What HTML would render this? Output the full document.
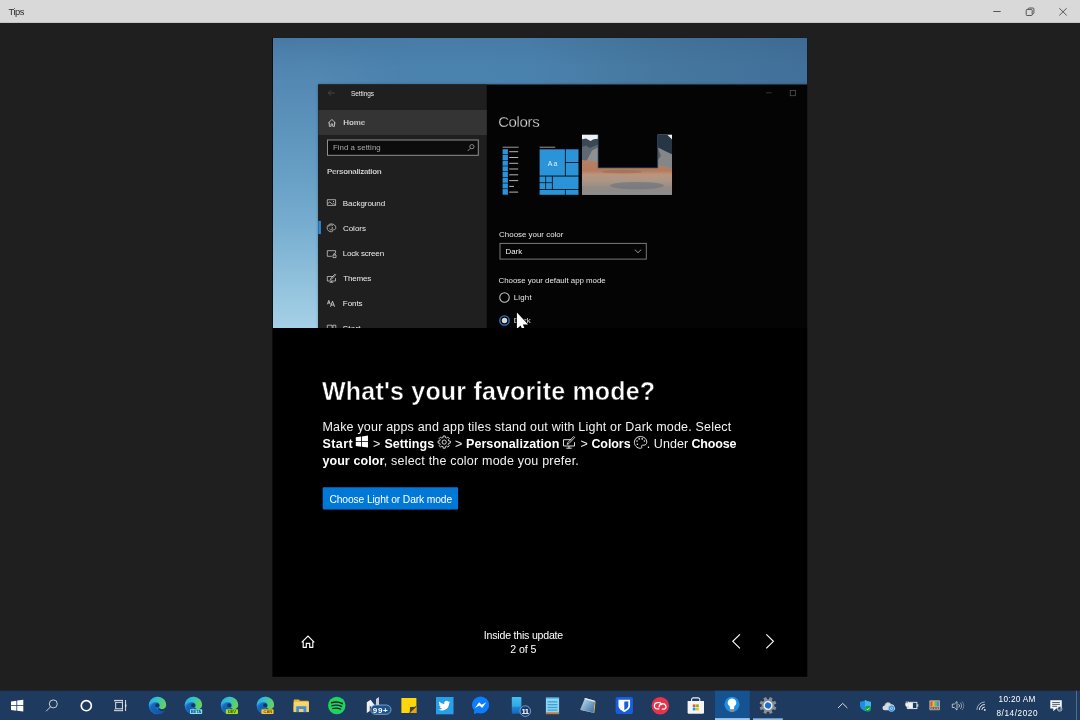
<!DOCTYPE html>
<html>
<head>
<meta charset="utf-8">
<title>Tips</title>
<style>
*{box-sizing:border-box;margin:0;padding:0}
html,body{width:1080px;height:720px;overflow:hidden;background:#1f1f1f;font-family:"Liberation Sans",sans-serif;color:#fff}
svg{position:absolute;left:0;top:0;overflow:hidden}
.t{position:absolute;white-space:nowrap;line-height:1}
#herotext,#toptext{will-change:transform}
#toptext{position:absolute;left:0;top:0;width:1080px;height:720px}
#herotext{position:absolute;left:272px;top:37px;width:536px;height:291px;overflow:hidden}
</style>
</head>
<body>
<svg width="1080" height="720" viewBox="0 0 1080 720" fill="none">
<defs>
  <linearGradient id="hbg" gradientUnits="userSpaceOnUse" x1="273" y1="28" x2="807" y2="47">
    <stop offset="0" stop-color="#4c80ab"/><stop offset=".3" stop-color="#4b83af"/><stop offset=".48" stop-color="#4a82ae"/><stop offset=".72" stop-color="#46789f"/><stop offset="1" stop-color="#41709a"/>
  </linearGradient>
  <linearGradient id="htop" gradientUnits="userSpaceOnUse" x1="0" y1="37.800" x2="0" y2="68">
    <stop offset="0" stop-color="#0a1e3c" stop-opacity=".07"/><stop offset="1" stop-color="#0a1e3c" stop-opacity="0"/>
  </linearGradient>
  <linearGradient id="hlight" gradientUnits="userSpaceOnUse" x1="0" y1="37.800" x2="0" y2="328.800">
    <stop offset="0" stop-color="#5489b3" stop-opacity="0"/><stop offset=".1" stop-color="#5489b3" stop-opacity=".6"/><stop offset=".16" stop-color="#5489b3"/>
    <stop offset=".285" stop-color="#5b92ba"/><stop offset=".49" stop-color="#69a0c6"/><stop offset=".645" stop-color="#77adcf"/><stop offset=".835" stop-color="#90c1dc"/><stop offset="1" stop-color="#a6d1e7"/>
  </linearGradient>
  <linearGradient id="hmaskg" gradientUnits="userSpaceOnUse" x1="273" y1="0" x2="400" y2="0">
    <stop offset="0" stop-color="#fff"/><stop offset=".36" stop-color="#fff"/><stop offset="1" stop-color="#000"/>
  </linearGradient>
  <mask id="hmask" maskUnits="userSpaceOnUse" x="272" y="37" width="140" height="292"><rect x="272" y="37" width="140" height="292" fill="url(#hmaskg)"/></mask>
  <clipPath id="heroclip"><rect x="272.900" y="37.800" width="534.400" height="290.100"/></clipPath>
  <filter id="wsh" x="-5%" y="-5%" width="110%" height="110%"><feGaussianBlur stdDeviation="1.500"/></filter>
</defs>
<!-- title bar -->
<rect x="0" y="0" width="1080" height="22.900" fill="#d9d9d9"/>
<g stroke="#474747" stroke-width=".9" transform="translate(990 4)">
  <path d="M3.300 7.500H10.700"/>
  <path d="M37.100 5.400h4.200q.9 0 .9.900v4.300q0 .9-.9.900h-4.200q-.9 0-.9-.9V6.300q0-.9.900-.9zM37.700 5.300l.8-1q.3-.3.800-.3h3.700q.9 0 .9.900v3.900q0 .5-.4.800l-1.100.9"/>
  <path d="M69.300 4.200l7.400 7.200M76.700 4.200l-7.400 7.200"/>
</g>
<!-- card -->
<rect x="272.400" y="37.800" width="534.900" height="639" fill="#000"/>
<g clip-path="url(#heroclip)">
  <rect x="272.900" y="37.800" width="534.400" height="291" fill="url(#hbg)"/>
  <rect x="272.900" y="37.800" width="534.400" height="31" fill="url(#htop)"/>
  <rect x="272.900" y="37.800" width="140" height="291" fill="url(#hlight)" mask="url(#hmask)"/>
  <rect x="318.300" y="84.500" width="489" height="245" fill="#000" opacity=".32" filter="url(#wsh)"/>
  <!-- settings window -->
  <rect x="318.300" y="84.500" width="489" height="245" fill="#040404"/>
  <rect x="318.300" y="84.500" width="168.500" height="245" fill="#1f1f1f"/>
  <rect x="318.300" y="110" width="168.500" height="25" fill="#343434"/>
  <rect x="327.500" y="140" width="150.800" height="15.300" fill="#0c0c0c" stroke="#909090" stroke-width="1"/>
  <rect x="318.300" y="220.900" width="2.600" height="13.200" fill="#2b8bd6"/>
  <rect x="500" y="243.400" width="146.300" height="15.700" fill="#040404" stroke="#7a7a7a" stroke-width="1"/>
  
  <!-- back arrow + caption buttons -->
  <path d="M334.700 93H328.400M331 90.300L328.300 93L331 95.700" stroke="#4e4e4e" stroke-width=".85"/>
  <path d="M766 92.800H771.600" stroke="#3c3c3c" stroke-width=".9"/>
  <rect x="790.3" y="90.500" width="5.200" height="5.200" stroke="#525252" stroke-width=".8"/>
  <!-- home -->
  <path d="M328.200 123.100L331.900 119.500L335.600 123.100M329.300 122.300V126.300H331.100V123.900H332.700V126.300H334.500V122.300" stroke="#e6e6e6" stroke-width=".75" stroke-linejoin="round"/>
  <!-- search glyph -->
  <circle cx="471.900" cy="146.700" r="2.100" stroke="#a8a8a8" stroke-width=".8"/>
  <path d="M470.400 148.300L467.700 151" stroke="#a8a8a8" stroke-width=".8"/>
  <!-- nav: background -->
  <g stroke="#dcdcdc" stroke-width=".7" stroke-linejoin="round">
    <rect x="327.300" y="199.700" width="8.300" height="5.700"/>
    <path d="M327.500 203.800L329.800 201.900L332.300 204.200L333.500 203.300L335.400 204.900"/>
    <circle cx="333.500" cy="201.400" r=".5" fill="#e4e4e4" stroke="none"/>
    <!-- colors palette -->
    <path d="M331.300 223.900C333.900 223.900 335.800 225.700 335.800 227.700C335.800 229 334.900 229.800 333.800 229.800H332.900C332.300 229.800 332 230.200 332.300 230.800C332.600 231.400 332.200 231.800 331.500 231.800C329 231.800 327.100 230 327.100 227.800C327.100 225.600 329 223.900 331.300 223.900Z"/>
    <path d="M328.600 226.800a2.600 2.600 0 0 1 4.200 -1.200M329.400 228.700a1.600 1.600 0 1 0 2.500 -1.900" stroke-width=".7"/>
    <!-- lock screen -->
    <path d="M331.800 256.300H327.300V250.700H335.600V253.300"/>
    <rect x="333" y="255" width="3" height="2.600"/>
    <path d="M333.700 255v-.8a.8.800 0 0 1 1.600 0v.8" stroke-width=".7"/>
    <!-- themes -->
    <path d="M333.200 276.500H327.300V281H335.500V278M329.600 282.300H333.300M331.400 281V282.300"/>
    <path d="M335.700 274.800L331.600 279.100L330.300 279.700L330.800 278.400L334.900 274.100Z" stroke-width=".7"/>
    <!-- fonts -->
    <path d="M327.400 304.300L328.800 300.300L330.200 304.300M327.900 303H329.700" stroke-width=".75"/>
    <path d="M330.500 306.700L332.500 301.200L334.600 306.700M331.200 305H333.800" stroke-width=".85"/>
    <!-- start (clipped) -->
    <rect x="327.300" y="325.200" width="4.800" height="3.400"/><rect x="333" y="325.200" width="2.800" height="3.400"/>
  </g>
  <!-- preview: list -->
  <rect x="502.600" y="146.700" width="16" height="1" fill="#9a9a9a"/>
  <g fill="#2b94d8">
    <rect x="502.600" y="149.200" width="5.300" height="5.100"/><rect x="502.600" y="154.900" width="5.300" height="5.100"/>
    <rect x="502.600" y="160.600" width="5.300" height="5.100"/><rect x="502.600" y="166.300" width="5.300" height="5.100"/>
    <rect x="502.600" y="172" width="5.300" height="5.100"/><rect x="502.600" y="177.700" width="5.300" height="5.100"/>
    <rect x="502.600" y="183.400" width="5.300" height="5.100"/><rect x="502.600" y="189.100" width="5.300" height="5.600"/>
  </g>
  <g fill="#b4b4b4">
    <rect x="509.200" y="151.200" width="9" height="1"/><rect x="509.200" y="157" width="9" height="1"/>
    <rect x="509.200" y="162.800" width="9" height="1"/><rect x="509.200" y="168.500" width="9" height="1"/>
    <rect x="509.200" y="174.300" width="9" height="1"/><rect x="509.200" y="180.100" width="9" height="1"/>
    <rect x="509.200" y="185.900" width="4.800" height="1"/><rect x="509.200" y="191.600" width="9" height="1"/>
  </g>
  <!-- preview: tiles -->
  <rect x="539.600" y="146.700" width="15.600" height="1" fill="#9a9a9a"/>
  <g fill="#2b94d8">
    <rect x="539.600" y="149.300" width="25.300" height="26.300"/>
    <rect x="565.700" y="149.300" width="12.800" height="12.800"/><rect x="565.700" y="162.900" width="12.800" height="12.700"/>
    <rect x="539.600" y="176.500" width="5.800" height="5.900"/><rect x="546.100" y="176.500" width="5.800" height="5.900"/>
    <rect x="539.600" y="183.100" width="5.800" height="6"/><rect x="546.100" y="183.100" width="5.800" height="6"/>
    <rect x="552.700" y="176.500" width="25.800" height="12.600"/>
    <rect x="539.600" y="189.900" width="25.300" height="4.900"/><rect x="565.700" y="189.900" width="12.800" height="4.900"/>
  </g>
  <!-- preview: wallpaper -->
  <defs>
    <linearGradient id="sand" x1="0" y1="0" x2="0" y2="1">
      <stop offset="0" stop-color="#b98064"/><stop offset=".3" stop-color="#b57b5e"/><stop offset=".42" stop-color="#ba957d"/>
      <stop offset=".6" stop-color="#ab9686"/><stop offset=".8" stop-color="#938b85"/><stop offset="1" stop-color="#8a8a8a"/>
    </linearGradient>
    <linearGradient id="mtl" x1="0" y1="0" x2="0" y2="1">
      <stop offset="0" stop-color="#2f3b45"/><stop offset=".4" stop-color="#55606a"/><stop offset="1" stop-color="#8a8c8e"/>
    </linearGradient>
    <linearGradient id="mtr" x1="0" y1="0" x2="0" y2="1">
      <stop offset="0" stop-color="#1f2d3a"/><stop offset=".45" stop-color="#3a444e"/><stop offset=".6" stop-color="#77797b"/><stop offset="1" stop-color="#8a8a8a"/>
    </linearGradient>
    <clipPath id="wp"><rect x="581.900" y="134.400" width="90.200" height="60.300"/></clipPath>
  </defs>
  <g clip-path="url(#wp)">
    <rect x="581.900" y="134.400" width="90.200" height="60.300" fill="#eef1f3"/>
    <path d="M581.900 139.300L586 138.600L590.500 141L593.500 139.200L598.100 138.800V162H581.900Z" fill="#3b4954"/>
    <path d="M581.900 147L586 145.500L590 148L598.100 144.500V162H581.900Z" fill="#5d6a74"/>
    <path d="M586 162L592 150.500L598.100 147.500V162Z" fill="#8e9092"/>
    <path d="M657.700 134.400H667L672.100 139.400V170H657.700Z" fill="#263644"/>
    <path d="M657.700 147.300L665 151L672.100 154.200V170H657.700Z" fill="#858687"/>
    <path d="M657.700 147.300L661 156L657.700 160Z" fill="#5a6068"/>
    <path d="M581.900 160.100L598.100 161.700V167.900H657.700V165L672.100 168.400V194.700H581.900Z" fill="url(#sand)"/>
    <ellipse cx="622" cy="171.800" rx="20" ry="1.700" fill="#9a6248" opacity=".45"/>
    <ellipse cx="637" cy="185.600" rx="27" ry="3.600" fill="#65717c" opacity=".6"/>
    <rect x="581.900" y="191.500" width="90.200" height="3.200" fill="#8f8f8f" opacity=".7"/>
  </g>
  <rect x="598.100" y="134" width="59.600" height="33.900" fill="#040404"/>
  <path d="M598.100 134.400V167.900H657.700V134.400" stroke="#1f4468" stroke-width=".6"/>
  <!-- dropdown chevron -->
  <path d="M634.800 249.600L638 252.700L641.200 249.600" stroke="#bcbcbc" stroke-width=".8"/>
  <!-- radios -->
  <circle cx="504.500" cy="297.400" r="4.750" stroke="#c4c4c4" stroke-width="1.050"/>
  <circle cx="504.500" cy="320.500" r="4.700" stroke="#2a7dc2" stroke-width="1.300"/>
  <circle cx="504.500" cy="320.500" r="2.700" fill="#d6d6d6"/>

</g>
<!-- button -->
<rect x="322.700" y="487.300" width="135.400" height="22.300" rx="1" fill="#0078d7"/>

  <!-- windows logo -->
  <g fill="#fff">
    <path d="M355.800 437.300L361.200 436.550V441.200H355.800Z"/><path d="M362 436.450L368 435.600V441.200H362Z"/>
    <path d="M355.800 442H361.200V446.650L355.800 445.900Z"/><path d="M362 442H368V447.600L362 446.750Z"/>
  </g>
  <!-- gear -->
  <path d="M448.76 440.97L450.32 441.08L450.32 443.12L448.76 443.23L448.23 444.52L449.24 445.70L447.80 447.14L446.62 446.13L445.33 446.66L445.22 448.22L443.18 448.22L443.07 446.66L441.78 446.13L440.60 447.14L439.16 445.70L440.17 444.52L439.64 443.23L438.08 443.12L438.08 441.08L439.64 440.97L440.17 439.68L439.16 438.50L440.60 437.06L441.78 438.07L443.07 437.54L443.18 435.98L445.22 435.98L445.33 437.54L446.62 438.07L447.80 437.06L449.24 438.50L448.23 439.68Z" stroke="#f4f4f4" stroke-width=".85" stroke-linejoin="round"/>
  <circle cx="444.200" cy="442.100" r="2.100" stroke="#f4f4f4" stroke-width=".85"/>
  <!-- personalization glyph -->
  <g stroke="#f4f4f4" stroke-width=".9" stroke-linejoin="round">
    <path d="M571.300 439.700H563.500V446H574.500V442.200M566.300 448.200H571.700M569 446V448.200"/>
    <path d="M574.700 437.500L569 443.500L567.200 444.400L567.900 442.500L573.600 436.500Z" stroke-width=".8"/>
  </g>
  <!-- palette glyph -->
  <g stroke="#f4f4f4" stroke-width=".9" stroke-linejoin="round">
    <path d="M640.300 436.500C644.100 436.500 646.800 439.100 646.800 442.100C646.800 444 645.500 445.200 643.900 445.200H642.600C641.700 445.200 641.300 445.800 641.700 446.700C642.100 447.600 641.600 448.300 640.500 448.300C636.900 448.300 634.400 445.600 634.400 442.300C634.400 439.100 637 436.500 640.300 436.500Z"/>
  </g>
  <g fill="#f4f4f4"><circle cx="637" cy="441" r=".8"/><circle cx="639.200" cy="438.900" r=".8"/><circle cx="642.200" cy="438.900" r=".8"/><circle cx="644.400" cy="441" r=".8"/><circle cx="637.400" cy="444.200" r=".8"/></g>
  <!-- footer home -->
  <path d="M301.700 642.400L308 636.100L314.300 642.400M303.200 641.400V647.400H306.300V643.400H309.700V647.400H312.800V641.400" stroke="#fff" stroke-width="1.150" stroke-linejoin="miter"/>
  <!-- footer chevrons -->
  <path d="M739.900 634.300L732.800 641.300L739.900 648.300" stroke="#fff" stroke-width="1.150"/>
  <path d="M766.300 634.300L773.400 641.300L766.300 648.300" stroke="#fff" stroke-width="1.150"/>

<!-- taskbar -->
<rect x="0" y="690.700" width="1080" height="29.300" fill="#1e3a5f"/>

<defs>
  <linearGradient id="edgeA" x1="0" y1="0" x2=".6" y2="1"><stop offset="0" stop-color="#2a9ae6"/><stop offset=".5" stop-color="#1b7fda"/><stop offset="1" stop-color="#166cc8"/></linearGradient>
  <linearGradient id="edgeB" x1="0" y1="0" x2="1" y2=".35"><stop offset="0" stop-color="#2ba3e6"/><stop offset=".45" stop-color="#33c1c8"/><stop offset="1" stop-color="#62d35c"/></linearGradient>
  <linearGradient id="edgeC" x1="0" y1="0" x2="1" y2="1"><stop offset="0" stop-color="#176fc8"/><stop offset="1" stop-color="#114f9c"/></linearGradient>
  <linearGradient id="phone" x1="0" y1="0" x2="0" y2="1"><stop offset="0" stop-color="#45c0ee"/><stop offset=".55" stop-color="#2fa8e4"/><stop offset=".6" stop-color="#1f86d4"/><stop offset="1" stop-color="#1566b8"/></linearGradient>
  <linearGradient id="np2" x1="0" y1="0" x2="1" y2="1"><stop offset="0" stop-color="#d4e4f0"/><stop offset=".5" stop-color="#7ea8c8"/><stop offset="1" stop-color="#2f6f9f"/></linearGradient>
  <linearGradient id="shield" x1="0" y1="0" x2="1" y2="0"><stop offset="0" stop-color="#1e8ee4"/><stop offset=".5" stop-color="#1e8ee4"/><stop offset=".5" stop-color="#41b4f2"/><stop offset="1" stop-color="#41b4f2"/></linearGradient>
</defs>
<!-- active app highlight -->
<rect x="715" y="690.700" width="34.800" height="29.300" fill="#15528f"/>
<rect x="715" y="718.100" width="34.800" height="1.900" fill="#9ccaf2"/>
<rect x="753" y="718.300" width="29.800" height="1.700" fill="#8cbcec"/>
<rect x="1076.200" y="690.700" width=".8" height="29.300" fill="#66788e"/>
<!-- start -->
<g fill="#fff">
  <path d="M11 701.400L16.400 700.650V705.200H11Z"/><path d="M17.200 700.550L23.300 699.700V705.200H17.200Z"/>
  <path d="M11 706H16.400V710.650L11 709.900Z"/><path d="M17.200 706H23.300V711.600L17.200 710.750Z"/>
</g>
<!-- search -->
<circle cx="53.300" cy="703.900" r="4" stroke="#d2d8de" stroke-width=".95"/>
<path d="M50.500 706.800L46.100 711.300" stroke="#d2d8de" stroke-width=".95"/>
<!-- cortana -->
<circle cx="86.300" cy="705.700" r="5.050" stroke="#fff" stroke-width="1.650"/>
<!-- task view -->
<g stroke="#ececec" stroke-width=".95">
  <rect x="115.700" y="702.300" width="6.700" height="6.500"/>
  <path d="M114.300 700.400H123M114.300 710.700H123M114.800 700.400V701.600M122.500 700.400V701.600M114.800 710.700V709.500M122.500 710.700V709.500M125.600 700V711"/>
</g>
<rect x="124.900" y="704.600" width="1.500" height="1.900" fill="#ececec"/>
<!-- edge x4 -->
<g transform="translate(157.5 705.500)">
    <circle r="8.700" fill="url(#edgeA)"/>
    <path d="M-7.200 3.600C-5.600 7.300 -0.800 9.200 3.600 7.900C5.400 7.300 6.600 6.300 7.300 5.100C5 6.300 1.600 6.100 -0.600 3.700C-2.300 1.800 -2.200 -1 -0.600 -2.400C-4.400 -2.800 -8.100 0 -7.200 3.600Z" fill="url(#edgeC)"/>
    <path d="M-8.700 0.500C-8.700 -4.600 -4.800 -8.700 0 -8.700C4.900 -8.700 8.700 -5 8.700 -0.600C8.700 2 6.800 3.600 4.600 3.600C2.800 3.600 1.600 3 1.600 2.300C1.600 1.600 2.300 1.200 2.300 -0.200C2.300 -2 0.600 -3.400 -1.600 -3.400C-5 -3.400 -8.200 -1 -8.700 0.500Z" fill="url(#edgeB)"/>
    <circle cx="-.200" cy="-.100" r="2.050" fill="#17365f"/>
    <path d="M1.600 2.600C2.400 3.500 3.500 3.800 4.800 3.700C6.500 3.600 7.900 2.700 8.500 1.400L9.300 4.200L7.400 5.100C5.400 6.100 2.800 5.900 1 4.500C.4 3.900 .8 2.900 1.600 2.600Z" fill="#1e3a5f"/>
    </g>
<g transform="translate(193.4 705.500)">
    <circle r="8.700" fill="url(#edgeA)"/>
    <path d="M-7.200 3.600C-5.600 7.300 -0.800 9.200 3.600 7.900C5.400 7.300 6.600 6.300 7.300 5.100C5 6.300 1.600 6.100 -0.600 3.700C-2.300 1.800 -2.200 -1 -0.600 -2.400C-4.400 -2.800 -8.100 0 -7.200 3.600Z" fill="url(#edgeC)"/>
    <path d="M-8.700 0.500C-8.700 -4.600 -4.800 -8.700 0 -8.700C4.900 -8.700 8.700 -5 8.700 -0.600C8.700 2 6.800 3.600 4.600 3.600C2.800 3.600 1.600 3 1.600 2.300C1.600 1.600 2.300 1.200 2.300 -0.200C2.300 -2 0.600 -3.400 -1.600 -3.400C-5 -3.400 -8.200 -1 -8.700 0.500Z" fill="url(#edgeB)"/>
    <circle cx="-.200" cy="-.100" r="2.050" fill="#17365f"/>
    <path d="M1.600 2.600C2.400 3.500 3.500 3.800 4.800 3.700C6.500 3.600 7.900 2.700 8.500 1.400L9.300 4.200L7.400 5.100C5.400 6.100 2.800 5.900 1 4.500C.4 3.900 .8 2.900 1.600 2.600Z" fill="#1e3a5f"/>
    </g><rect x="190" y="709.200" width="12.200" height="4.800" rx=".8" fill="#86e2f2"/>
<g transform="translate(229.5 705.500)">
    <circle r="8.700" fill="url(#edgeA)"/>
    <path d="M-7.200 3.600C-5.600 7.300 -0.800 9.200 3.600 7.900C5.400 7.300 6.600 6.300 7.300 5.100C5 6.300 1.600 6.100 -0.600 3.700C-2.300 1.800 -2.200 -1 -0.600 -2.400C-4.400 -2.800 -8.100 0 -7.200 3.600Z" fill="url(#edgeC)"/>
    <path d="M-8.700 0.500C-8.700 -4.600 -4.800 -8.700 0 -8.700C4.900 -8.700 8.700 -5 8.700 -0.600C8.700 2 6.800 3.600 4.600 3.600C2.800 3.600 1.600 3 1.600 2.300C1.600 1.600 2.300 1.200 2.300 -0.200C2.300 -2 0.600 -3.400 -1.600 -3.400C-5 -3.400 -8.200 -1 -8.700 0.500Z" fill="url(#edgeB)"/>
    <circle cx="-.200" cy="-.100" r="2.050" fill="#17365f"/>
    <path d="M1.600 2.600C2.400 3.500 3.500 3.800 4.800 3.700C6.500 3.600 7.900 2.700 8.500 1.400L9.300 4.200L7.400 5.100C5.400 6.100 2.800 5.900 1 4.500C.4 3.900 .8 2.900 1.600 2.600Z" fill="#1e3a5f"/>
    </g><rect x="225.8" y="709.200" width="12.200" height="4.800" rx=".8" fill="#a6da1e"/>
<g transform="translate(265.4 705.500)">
    <circle r="8.700" fill="url(#edgeA)"/>
    <path d="M-7.200 3.600C-5.600 7.300 -0.800 9.200 3.600 7.900C5.400 7.300 6.600 6.300 7.300 5.100C5 6.300 1.600 6.100 -0.600 3.700C-2.300 1.800 -2.200 -1 -0.600 -2.400C-4.400 -2.800 -8.100 0 -7.200 3.600Z" fill="url(#edgeC)"/>
    <path d="M-8.700 0.500C-8.700 -4.600 -4.800 -8.700 0 -8.700C4.900 -8.700 8.700 -5 8.700 -0.600C8.700 2 6.800 3.600 4.600 3.600C2.800 3.600 1.600 3 1.600 2.300C1.600 1.600 2.300 1.200 2.300 -0.200C2.300 -2 0.600 -3.400 -1.600 -3.400C-5 -3.400 -8.200 -1 -8.700 0.500Z" fill="url(#edgeB)"/>
    <circle cx="-.200" cy="-.100" r="2.050" fill="#17365f"/>
    <path d="M1.600 2.600C2.400 3.500 3.500 3.800 4.800 3.700C6.500 3.600 7.900 2.700 8.500 1.400L9.300 4.200L7.400 5.100C5.400 6.100 2.800 5.900 1 4.500C.4 3.900 .8 2.900 1.600 2.600Z" fill="#1e3a5f"/>
    </g><rect x="261.4" y="709.200" width="12.200" height="4.800" rx=".8" fill="#f2c232"/>
<!-- explorer -->
<path d="M293.700 700.300q0-.8.800-.8h4.300l1.200 1.300h8q.8 0 .8.800v9.700q0 .8-.8.800h-13.500q-.8 0-.8-.8Z" fill="#e9b83c"/>
<rect x="293.700" y="701.900" width="15.100" height="10.200" rx=".7" fill="#f9d66b"/>
<rect x="293.700" y="705.600" width="15.100" height="6.500" fill="#f6cf5a"/>
<path d="M296.200 712.100V706.800q0-.6.600-.6h8.900q.6 0 .6.600V712.100H303.500V708.900H299V712.100Z" fill="#3b8fe4"/>
<!-- spotify -->
<circle cx="336.800" cy="705.500" r="8.700" fill="#1ed45e"/>
<g stroke="#15202c" stroke-linecap="round">
  <path d="M331.600 702.700Q337 701 342.300 703.500" stroke-width="1.700"/>
  <path d="M332.100 705.700Q336.900 704.300 341.500 706.400" stroke-width="1.400"/>
  <path d="M332.700 708.500Q336.700 707.400 340.600 709.100" stroke-width="1.150"/>
</g>
<!-- notion-like + 99+ badge -->
<path d="M366.800 702.300L370.600 699.700L376 707V699.300L378.900 697.300V710.200L375.200 712.800L369.800 705.600V711L366.800 713Z" fill="#eef0f2"/>
<path d="M376 699.300L378.900 697.300V710.200L376 707Z" fill="#c9ced4"/>
<rect x="370.800" y="705" width="20.200" height="9.300" rx="4.650" fill="#1b5294" stroke="#a9c2e0" stroke-width=".7"/>
<!-- sticky notes -->
<rect x="401.400" y="698" width="15" height="15" fill="#ffd60a"/>
<path d="M416.400 705.500V713H408.900Z" fill="#e6a70a"/>
<path d="M416.400 706.700L410.200 707L409.800 713H408.900L416.400 705.500Z" fill="#3d3a34"/>
<path d="M410 707.100L416.400 706.700L409.800 713Z" fill="#45413a"/>
<!-- twitter -->
<rect x="436" y="697" width="17.500" height="17.300" fill="#2a9fe9"/>
<path d="M450.400 702.200c-.4.200-.9.300-1.400.4.500-.3.900-.8 1.100-1.400-.5.300-1 .5-1.600.6a2.400 2.400 0 0 0-4.200 2.200c-2-.1-3.800-1.100-5-2.600-.6 1.100-.3 2.500.8 3.200-.4 0-.8-.1-1.100-.3 0 1.200.8 2.200 1.900 2.400-.4.100-.7.100-1.100 0 .3 1 1.200 1.700 2.300 1.700-1 .8-2.300 1.200-3.600 1 1.100.7 2.400 1.100 3.700 1.100 4.500 0 7-3.800 6.900-7.200.5-.3.900-.7 1.300-1.100Z" fill="#fff"/>
<!-- messenger -->
<circle cx="480.600" cy="705" r="8.600" fill="#0d7dff"/>
<path d="M474.200 710.600L473.900 714.100L477.600 712.900Z" fill="#0d7dff"/>
<path d="M474.900 707.900L479.100 702.300L481.700 704.800L486.300 702.300L482.100 707.900L479.500 705.400Z" fill="#fff"/>
<!-- your phone + 11 badge -->
<rect x="511.800" y="697" width="9.600" height="16.800" rx=".8" fill="url(#phone)"/>
<circle cx="525.300" cy="711.100" r="5.300" fill="#163b70" stroke="#a9c2e0" stroke-width=".7"/>
<!-- notepad -->
<rect x="545.900" y="697.900" width="13.200" height="15.500" fill="#8ad6f4"/>
<rect x="545.900" y="697.400" width="13.200" height="1.400" fill="#5cb6e0"/>
<rect x="545.900" y="712.300" width="13.200" height="1.900" fill="#c87a30"/>
<g fill="#3f9fd0"><rect x="547.600" y="701.200" width="9.800" height="1.300"/><rect x="547.600" y="704" width="9.800" height="1.300"/><rect x="547.600" y="706.800" width="9.800" height="1.300"/><rect x="547.600" y="709.500" width="9.800" height="1.200"/></g>
<!-- notepad++ like tilted pad -->
<path d="M585 698L594.800 700.800L593.300 712.600L580.300 709.300Z" fill="url(#np2)"/>
<path d="M594.800 700.800L595.600 701.400L594.300 713L593.300 712.600Z" fill="#e8c04a"/>
<path d="M580.300 709.300L593.300 712.600L594.300 713L580.700 709.900Z" fill="#f2f4f6"/>
<path d="M585 698L594.800 700.800L594.600 702L584.500 699.100Z" fill="#eef4f8"/>
<!-- bitwarden -->
<rect x="615.600" y="697" width="17.400" height="16.900" rx="1.800" fill="#175ddc"/>
<path d="M618.500 699.800H630.100V705.800C630.100 708.600 627.400 710.600 624.300 712C621.200 710.600 618.500 708.600 618.500 705.800Z" fill="#fff"/>
<path d="M624.300 701.500H628.300V705.800C628.300 707.600 626.400 709 624.300 710Z" fill="#175ddc"/>
<!-- adobe cc -->
<circle cx="660.300" cy="705.700" r="8.800" fill="#e8334a"/>
<g stroke="#fff" stroke-width="1.250" stroke-linecap="round">
  <path d="M658.800 708.900H657.600A3.200 3.200 0 0 1 657.600 702.500H658.400A3.600 3.600 0 0 1 661.700 704.600"/>
  <path d="M659 706.800A3.600 3.600 0 0 1 665.800 705.800A2.300 2.300 0 0 1 664.500 709H662.300"/>
</g>
<!-- store -->
<path d="M691.600 701.300V699.600a1.700 1.700 0 0 1 1.700 -1.700h4.800a1.700 1.700 0 0 1 1.700 1.700V701.300" stroke="#f2f2f2" stroke-width="1.100"/>
<path d="M687.600 701.100H704V712.500Q704 713.800 702.700 713.800H688.900Q687.600 713.800 687.600 712.500Z" fill="#f4f4f4"/>
<rect x="692.800" y="704.400" width="2.700" height="2.700" fill="#f25022"/><rect x="696.100" y="704.400" width="2.700" height="2.700" fill="#7fba00"/>
<rect x="692.800" y="707.700" width="2.700" height="2.700" fill="#00a4ef"/><rect x="696.100" y="707.700" width="2.700" height="2.700" fill="#ffb900"/>
<!-- tips -->
<circle cx="732" cy="704.300" r="7.600" fill="#1f8fe2"/>
<path d="M732 698.400a4.300 4.300 0 0 1 2.600 7.700q-.5.500-.5 1.300V709.400H729.900V707.400q0-.8-.5-1.300A4.300 4.300 0 0 1 732 698.400Z" fill="#fff"/>
<rect x="729.900" y="709.600" width="4.200" height="2.300" rx=".6" fill="#8a8a8a"/>
<!-- settings gear -->
<g transform="translate(768 705.500) rotate(22.5)">
  <path d="M6.11 -1.52L8.46 -1.55L8.46 1.55L6.11 1.52L5.40 3.25L7.07 4.89L4.89 7.07L3.25 5.40L1.52 6.11L1.55 8.46L-1.55 8.46L-1.52 6.11L-3.25 5.40L-4.89 7.07L-7.07 4.89L-5.40 3.25L-6.11 1.52L-8.46 1.55L-8.46 -1.55L-6.11 -1.52L-5.40 -3.25L-7.07 -4.89L-4.89 -7.07L-3.25 -5.40L-1.52 -6.11L-1.55 -8.46L1.55 -8.46L1.52 -6.11L3.25 -5.40L4.89 -7.07L7.07 -4.89L5.40 -3.25Z" fill="#8b8f94"/>
  <circle r="4.500" fill="#f2f2f2"/><circle r="3.100" fill="#1a6fd2"/>
</g>
<!-- tray chevron -->
<path d="M838 708L842.700 703.400L847.400 708" stroke="#e6e6e6" stroke-width=".95"/>
<!-- defender -->
<path d="M865.500 700C867 701.200 869 701.700 871 701.700V705.500C871 708.300 868.500 710.200 865.500 711.200C862.500 710.200 860 708.300 860 705.500V701.700C862 701.700 864 701.200 865.500 700Z" fill="url(#shield)"/>
<circle cx="868" cy="708.700" r="3" fill="#13a040"/>
<path d="M866.500 708.800L867.600 709.900L869.600 707.700" stroke="#fff" stroke-width=".8"/>
<!-- onedrive -->
<path d="M885 710.300a2.400 2.400 0 0 1 -.3 -4.800a3.400 3.400 0 0 1 6.300 -1.300a2.800 2.800 0 0 1 3.300 2.800a1.800 1.800 0 0 1 -.5 3.300Z" fill="#d6dade"/>
<path d="M884.700 705.500a3.400 3.400 0 0 1 6.300 -1.300" stroke="#9aa2aa" stroke-width=".6"/>
<circle cx="891.500" cy="708.400" r="3.100" fill="#2e8ee0" stroke="#cfe4f8" stroke-width=".5"/>
<path d="M890.100 708.800a1.500 1.500 0 0 1 2.600 -1.100M892.900 708a1.500 1.500 0 0 1 -2.600 1.100" stroke="#fff" stroke-width=".6"/>
<!-- battery -->
<rect x="908.300" y="702.300" width="8.600" height="6.300" stroke="#f2f2f2" stroke-width=".9"/>
<rect x="917.300" y="704.200" width="1" height="2.500" fill="#f2f2f2"/>
<rect x="908.700" y="702.700" width="4.200" height="5.500" fill="#f2f2f2"/>
<path d="M906.300 701.300V703.300M908 701.300V703.300M905.700 703.300H908.600V705.200Q908.600 706.500 907.200 706.500Q905.700 706.500 905.700 705.200ZM907.200 706.500V708.600H908.600" stroke="#f2f2f2" stroke-width=".7" fill="#f2f2f2"/>
<!-- colourful tray app -->
<rect x="929.300" y="700.300" width="10.700" height="10" rx="1" fill="#b5a595"/>
<rect x="930.500" y="701.500" width="2.100" height="4.700" fill="#e8503a"/><rect x="932.600" y="701.500" width="2.100" height="4.700" fill="#f2b824"/>
<rect x="934.700" y="701.500" width="2.100" height="4.700" fill="#5cc04a"/><rect x="936.800" y="701.500" width="2.100" height="4.700" fill="#3a8ee0"/>
<rect x="930.500" y="707.200" width="8.400" height="2.100" fill="#6a5c50"/>
<g fill="#d8ccc0"><rect x="931.500" y="707.800" width="1.200" height=".9"/><rect x="934.100" y="707.800" width="1.200" height=".9"/><rect x="936.700" y="707.800" width="1.200" height=".9"/></g>
<!-- volume -->
<path d="M952.300 704.100H954.300L957 701.500V710.100L954.300 707.500H952.300Z" stroke="#e4e4e4" stroke-width=".75" stroke-linejoin="round"/>
<path d="M958.700 704.200a2.200 2.200 0 0 1 0 3.200" stroke="#ececec" stroke-width=".8"/>
<path d="M960.300 702.700a4.300 4.300 0 0 1 0 6.200" stroke="#b4bcc6" stroke-width=".8"/>
<path d="M961.900 701.300a6.400 6.400 0 0 1 0 9" stroke="#7c8898" stroke-width=".8"/>
<!-- wifi -->
<circle cx="984.800" cy="709.900" r=".9" fill="#f2f2f2"/>
<g stroke="#f2f2f2" stroke-width=".95"><path d="M981.900 709.900a2.900 2.900 0 0 1 2.900 -2.900"/><path d="M979.400 709.900a5.400 5.400 0 0 1 5.400 -5.400"/></g>
<path d="M976.900 709.900a7.900 7.900 0 0 1 7.900 -7.900" stroke="#a8b2be" stroke-width=".95"/>
<!-- notification -->
<path d="M1050.300 700.200H1061.800V708.600H1056.300L1053.300 711.200V708.600H1050.300Z" fill="#f6f6f6"/>
<g stroke="#1e3a5f" stroke-width=".8"><path d="M1052.200 702.500H1059.900M1052.200 704.400H1059.900M1052.200 706.300H1057"/></g>
<circle cx="1059.700" cy="708.900" r="2.300" fill="#1e3a5f" stroke="#e8e8e8" stroke-width=".7"/>
<path d="M1058.600 708.700a1.200 1.200 0 1 0 1.200 -1.100" stroke="#e8e8e8" stroke-width=".5"/>

</svg>

<div id="herotext">
<div class="t" style="left:78.98px;top:54.00px;font-size:6.5px;color:#ececec;letter-spacing:-0.064px;">Settings</div>
<div class="t" style="left:71.30px;top:82.00px;font-size:8px;color:#e8e8e8;letter-spacing:-0.145px;font-weight:700;-webkit-text-stroke:.2px #343434;">Home</div>
<div class="t" style="left:60.91px;top:107.00px;font-size:7.9px;color:#a8a8a8;letter-spacing:0.032px;">Find a setting</div>
<div class="t" style="left:55.10px;top:131.00px;font-size:8px;color:#e8e8e8;letter-spacing:-0.323px;font-weight:700;-webkit-text-stroke:.2px #1f1f1f;">Personalization</div>
<div class="t" style="left:70.70px;top:163.00px;font-size:8px;color:#ececec;letter-spacing:-0.023px;">Background</div>
<div class="t" style="left:70.90px;top:188.00px;font-size:8px;color:#ececec;letter-spacing:-0.005px;">Colors</div>
<div class="t" style="left:70.70px;top:213.00px;font-size:8px;color:#ececec;letter-spacing:-0.174px;">Lock screen</div>
<div class="t" style="left:71.20px;top:238.00px;font-size:8px;color:#ececec;letter-spacing:-0.181px;">Themes</div>
<div class="t" style="left:70.80px;top:263.00px;font-size:8px;color:#ececec;letter-spacing:-0.054px;">Fonts</div>
<div class="t" style="left:70.80px;top:288.00px;font-size:8px;color:#ececec;letter-spacing:0.223px;">Start</div>
<div class="t" style="left:226.15px;top:77.00px;font-size:15px;color:#e0e0e0;letter-spacing:-0.352px;-webkit-text-stroke:.3px #040404;">Colors</div>
<div class="t" style="left:275.85px;top:123.00px;font-size:7px;color:#dff0fa;letter-spacing:0.938px;">Aa</div>
<div class="t" style="left:227.11px;top:194.00px;font-size:7.9px;color:#e6e6e6;letter-spacing:0.015px;">Choose your color</div>
<div class="t" style="left:233.41px;top:211.00px;font-size:7.9px;color:#f0f0f0;letter-spacing:0.039px;">Dark</div>
<div class="t" style="left:226.50px;top:240.00px;font-size:7.9px;color:#e6e6e6;letter-spacing:-0.027px;">Choose your default app mode</div>
<div class="t" style="left:241.81px;top:257.00px;font-size:7.9px;color:#e6e6e6;letter-spacing:0.166px;">Light</div>
<div class="t" style="left:241.81px;top:280.00px;font-size:7.9px;color:#e6e6e6;letter-spacing:0.039px;">Dark</div>
</div>

<svg width="1080" height="720" viewBox="0 0 1080 720" fill="none">
  <defs><clipPath id="heroclip2"><rect x="272.900" y="37.800" width="534.400" height="290.100"/></clipPath></defs>
  <g clip-path="url(#heroclip2)"><path transform="translate(516.900 312.500)" d="M0 0V16.500L3.700 12.900L6.300 18.900L8.500 18L6 12.100H11.200Z" fill="#fff" stroke="#000" stroke-width="1.100" paint-order="stroke"/></g>
</svg>

<div id="toptext">
<div class="t" style="left:8.53px;top:7.00px;font-size:9.4px;color:#2b2b2b;letter-spacing:-0.478px;">Tips</div>
<div class="t" style="left:322.05px;top:379.00px;font-size:25px;color:#fff;letter-spacing:0.195px;font-weight:700;-webkit-text-stroke:.45px #000;">What&#x27;s your favorite mode?</div>
<div class="t" style="left:322.38px;top:421.00px;font-size:12.5px;color:#f2f2f2;letter-spacing:0.196px;">Make your apps and app tiles stand out with Light or Dark mode. Select</div>
<div class="t" style="left:322.38px;top:438.00px;font-size:12.5px;color:#fff;letter-spacing:0.441px;font-weight:700;">Start</div>
<div class="t" style="left:372.98px;top:438.00px;font-size:12.5px;color:#f2f2f2;letter-spacing:0.000px;">&gt;</div>
<div class="t" style="left:384.38px;top:438.00px;font-size:12.5px;color:#fff;letter-spacing:0.062px;font-weight:700;">Settings</div>
<div class="t" style="left:454.98px;top:438.00px;font-size:12.5px;color:#f2f2f2;letter-spacing:0.000px;">&gt;</div>
<div class="t" style="left:465.98px;top:438.00px;font-size:12.5px;color:#fff;letter-spacing:0.076px;font-weight:700;">Personalization</div>
<div class="t" style="left:580.38px;top:438.00px;font-size:12.5px;color:#f2f2f2;letter-spacing:0.000px;">&gt;</div>
<div class="t" style="left:591.38px;top:438.00px;font-size:12.5px;color:#fff;letter-spacing:-0.069px;font-weight:700;">Colors</div>
<div class="t" style="left:646.67px;top:438.00px;font-size:12.5px;color:#f2f2f2;letter-spacing:0.092px;">. Under</div>
<div class="t" style="left:691.38px;top:438.00px;font-size:12.5px;color:#fff;letter-spacing:-0.159px;font-weight:700;">Choose</div>
<div class="t" style="left:322.38px;top:455.00px;font-size:12.5px;color:#fff;letter-spacing:0.092px;font-weight:700;">your color</div>
<div class="t" style="left:383.77px;top:455.00px;font-size:12.5px;color:#f2f2f2;letter-spacing:0.199px;">, select the color mode you prefer.</div>
<div class="t" style="left:329.49px;top:495.00px;font-size:10.3px;color:#fff;letter-spacing:-0.137px;">Choose Light or Dark mode</div>
<div class="t" style="left:483.87px;top:630.00px;font-size:10.6px;color:#fff;letter-spacing:-0.217px;">Inside this update</div>
<div class="t" style="left:510.27px;top:644.00px;font-size:10.6px;color:#fff;letter-spacing:-0.091px;">2 of 5</div>
<div class="t" style="left:998.59px;top:696.00px;font-size:8.2px;color:#fff;letter-spacing:0.318px;">10:20 AM</div>
<div class="t" style="left:996.49px;top:710.00px;font-size:8.2px;color:#fff;letter-spacing:0.573px;">8/14/2020</div>
<div class="t" style="left:372.80px;top:707.00px;font-size:8px;color:#fff;letter-spacing:0.711px;font-weight:700;">99+</div>
<div class="t" style="left:521.41px;top:708.00px;font-size:7.8px;color:#fff;letter-spacing:-0.470px;font-weight:700;">11</div>
<div class="t" style="left:190.79px;top:710.00px;font-size:4.2px;color:#164a7a;letter-spacing:-0.225px;font-weight:700;">BETA</div>
<div class="t" style="left:227.99px;top:710.00px;font-size:4.2px;color:#2c5a10;letter-spacing:-0.303px;font-weight:700;">DEV</div>
<div class="t" style="left:263.49px;top:710.00px;font-size:4.2px;color:#7a5208;letter-spacing:-0.129px;font-weight:700;">CAN</div>
</div>
</body>
</html>
